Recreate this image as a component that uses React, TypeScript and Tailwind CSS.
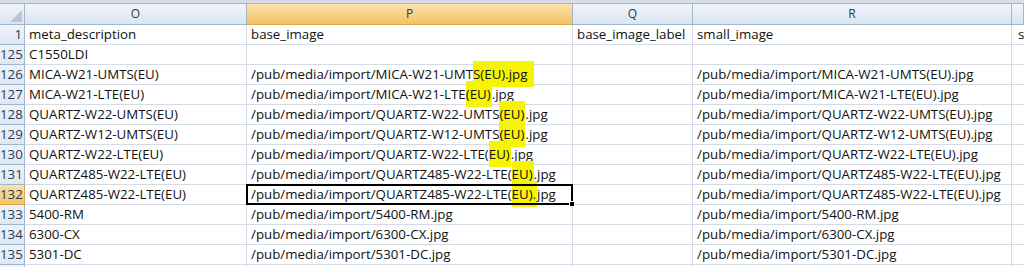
import React from "react"

type Row = {
  n: number
  meta: string
  base?: [string, string, string]
  small?: string
}

const rows: Row[] = [
  { n: 125, meta: "C1550LDI" },
  {
    n: 126,
    meta: "MICA-W21-UMTS(EU)",
    base: ["/pub/media/import/MICA-W21-UMT", "S(EU).jpg", ""],
    small: "/pub/media/import/MICA-W21-UMTS(EU).jpg",
  },
  {
    n: 127,
    meta: "MICA-W21-LTE(EU)",
    base: ["/pub/media/import/MICA-W21-LTE", "(EU)", ".jpg"],
    small: "/pub/media/import/MICA-W21-LTE(EU).jpg",
  },
  {
    n: 128,
    meta: "QUARTZ-W22-UMTS(EU)",
    base: ["/pub/media/import/QUARTZ-W22-UMTS", "(EU)", ".jpg"],
    small: "/pub/media/import/QUARTZ-W22-UMTS(EU).jpg",
  },
  {
    n: 129,
    meta: "QUARTZ-W12-UMTS(EU)",
    base: ["/pub/media/import/QUARTZ-W12-UMTS", "(EU)", ".jpg"],
    small: "/pub/media/import/QUARTZ-W12-UMTS(EU).jpg",
  },
  {
    n: 130,
    meta: "QUARTZ-W22-LTE(EU)",
    base: ["/pub/media/import/QUARTZ-W22-LTE(", "EU)", ".jpg"],
    small: "/pub/media/import/QUARTZ-W22-LTE(EU).jpg",
  },
  {
    n: 131,
    meta: "QUARTZ485-W22-LTE(EU)",
    base: ["/pub/media/import/QUARTZ485-W22-LTE(", "EU)", ".jpg"],
    small: "/pub/media/import/QUARTZ485-W22-LTE(EU).jpg",
  },
  {
    n: 132,
    meta: "QUARTZ485-W22-LTE(EU)",
    base: ["/pub/media/import/QUARTZ485-W22-LTE(", "EU).", "jpg"],
    small: "/pub/media/import/QUARTZ485-W22-LTE(EU).jpg",
  },
  { n: 133, meta: "5400-RM", base: ["/pub/media/import/5400-RM.jpg", "", ""], small: "/pub/media/import/5400-RM.jpg" },
  { n: 134, meta: "6300-CX", base: ["/pub/media/import/6300-CX.jpg", "", ""], small: "/pub/media/import/6300-CX.jpg" },
  { n: 135, meta: "5301-DC", base: ["/pub/media/import/5301-DC.jpg", "", ""], small: "/pub/media/import/5301-DC.jpg" },
]

const cols = "grid grid-cols-[25px_222px_326px_120px_319px_1fr]"
const cell = "h-[20px] border-r border-b border-[#d4dbe6] pl-[4px] leading-[19px] whitespace-nowrap overflow-visible"
const rowHead = "h-[20px] border-r border-b border-[#9eb6ce] bg-gradient-to-b from-[#eef3fa] to-[#dfe7f2] text-right pr-[2px] leading-[19px] text-[#2c3a52]"

function ColHead({ label, active }: { label: string; active?: boolean }) {
  return (
    <div
      className={
        "h-[21px] border-r border-b border-[#9eb6ce] text-center text-[12px] leading-[20px] text-[#2c3a52] " +
        (active
          ? "bg-gradient-to-b from-[#fbe2ac] to-[#f3c262] border-b-[#e0a545]"
          : "bg-gradient-to-b from-[#f1f5fb] to-[#dbe4f0]")
      }
    >
      {label}
    </div>
  )
}

export default function App() {
  return (
    <div className="w-[1024px] h-[267px] overflow-hidden bg-white font-['Open_Sans',sans-serif] text-[13.3px] text-[#111]">
      <div className="h-[4px] bg-[#d6dde6] border-b border-[#a9b8c9]" />
      <div className={cols}>
        <div className="relative h-[21px] border-r border-b border-[#9eb6ce] bg-gradient-to-b from-[#f1f5fb] to-[#dbe4f0]">
          <div className="absolute right-[2px] bottom-[2px] w-0 h-0 border-l-[12px] border-l-transparent border-b-[12px] border-b-[#b7c5d6]" />
        </div>
        <ColHead label="O" />
        <ColHead label="P" active />
        <ColHead label="Q" />
        <ColHead label="R" />
        <ColHead label="" />

        <div className={rowHead}>1</div>
        <div className={cell}>meta_description</div>
        <div className={cell}>base_image</div>
        <div className={cell}>base_image_label</div>
        <div className={cell}>small_image</div>
        <div className={cell + " border-r-0 overflow-hidden pl-[6px]"}>s</div>

        {rows.map((r) => {
          const selected = r.n === 132
          return (
            <React.Fragment key={r.n}>
              <div
                className={
                  selected
                    ? "h-[20px] border-r border-b border-[#e0a545] bg-gradient-to-b from-[#fbe2ac] to-[#f3c262] text-right pr-[2px] leading-[19px] text-[#2c3a52]"
                    : rowHead
                }
              >
                {r.n}
              </div>
              <div className={cell}>{r.meta}</div>
              <div className={cell + (selected ? " relative" : "")}>
                {r.base && (
                  <>
                    {r.base[0]}
                    {r.base[1] && (
                      <span className="bg-[#f6f400] py-[4px] pr-[1px]">{r.base[1]}</span>
                    )}
                    {r.base[2]}
                    {r.n === 126 && <span className="bg-[#f6f400] py-[4px] pl-[6px]"> </span>}
                  </>
                )}
                {selected && (
                  <div className="absolute left-[-1px] top-[-1px] right-[-1px] bottom-[-1px] border-2 border-black">
                    <div className="absolute right-[-4px] bottom-[-4px] w-[6px] h-[6px] bg-black border border-white" />
                  </div>
                )}
              </div>
              <div className={cell}></div>
              <div className={cell}>{r.small}</div>
              <div className={cell + " border-r-0"}></div>
            </React.Fragment>
          )
        })}
        <div className={rowHead}></div>
        <div className={cell}></div>
        <div className={cell}></div>
        <div className={cell}></div>
        <div className={cell}></div>
        <div className={cell + " border-r-0"}></div>
      </div>
    </div>
  )
}
